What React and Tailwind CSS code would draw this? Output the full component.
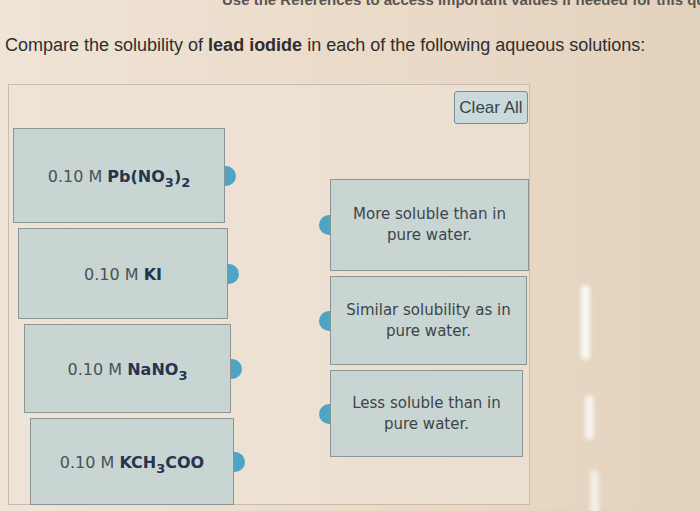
import React from "react";

const Sub = ({ children }) => (
  <span className="relative top-[5px] text-[13px]">{children}</span>
);

const leftItems = [
  { formula: <>Pb(NO<Sub>3</Sub>)<Sub>2</Sub></>, ml: "ml-[4px]", w: "w-[212px]", h: "h-[95px]" },
  { formula: <>KI</>, ml: "ml-[9px]", w: "w-[210px]", h: "h-[91px]" },
  { formula: <>NaNO<Sub>3</Sub></>, ml: "ml-[15px]", w: "w-[207px]", h: "h-[89px]" },
  { formula: <>KCH<Sub>3</Sub>COO</>, ml: "ml-[21px]", w: "w-[204px]", h: "h-[87px]" },
];

const rightItems = [
  { text: ["More soluble than in", "pure water."], w: "w-[199px]", h: "h-[92px]" },
  { text: ["Similar solubility as in", "pure water."], w: "w-[197px]", h: "h-[89px]" },
  { text: ["Less soluble than in", "pure water."], w: "w-[193px]", h: "h-[87px]" },
];

// draggable answer tile with the blue connector nub
function LeftCard({ item }) {
  return (
    <div className={`relative ${item.ml} ${item.w} ${item.h} flex items-center justify-center border border-[#8c9593] bg-[#c8d5d2] text-[16px] text-[#4a5254] font-['DejaVu_Sans',sans-serif]`}>
      <span className="whitespace-nowrap pt-[2px]">
        0.10 M <b className="text-[#26354f]">{item.formula}</b>
      </span>
      <div className="absolute right-[-12px] top-1/2 -translate-y-1/2 w-[11px] h-[20px] rounded-r-full bg-[#4ea4c4]" />
    </div>
  );
}

function RightCard({ item }) {
  return (
    <div className={`relative ${item.w} ${item.h} flex flex-col items-center justify-center border border-[#8c9593] bg-[#c8d5d2] text-[15px] leading-[21px] text-[#3c4548] font-['DejaVu_Sans',sans-serif]`}>
      {item.text.map((t) => (
        <span key={t}>{t}</span>
      ))}
      <div className="absolute left-[-12px] top-1/2 -translate-y-1/2 w-[11px] h-[20px] rounded-l-full bg-[#4ea4c4]" />
    </div>
  );
}

export default function App() {
  return (
    <div className="relative w-[700px] h-[511px] overflow-hidden bg-gradient-to-r from-[#efe4d7] via-[#ebdbc9] to-[#e2d2bd] font-['Liberation_Sans',sans-serif]">
      <div className="h-[9px] overflow-hidden pl-[222px]">
        <div className="-mt-[11px] whitespace-nowrap text-[15px] font-bold text-[#5a5550]">
          Use the References to access important values if needed for this question.
        </div>
      </div>

      <p className="mt-[23px] ml-[5px] text-[18px] text-[#2e2e2e] whitespace-nowrap">
        Compare the solubility of <b>lead iodide</b> in each of the following aqueous solutions:
      </p>

      <div className="mt-[25px] ml-[8px] w-[522px] h-[421px] border border-[#c9bcae] bg-[#ede2d6]/70">
        <div className="flex justify-end pt-[6px] pr-[1px]">
          <button className="w-[74px] h-[33px] rounded-[3px] border border-[#7f8d8f] bg-[#c9d9dc] text-[17px] text-[#3a4446]">
            Clear All
          </button>
        </div>

        <div className="flex">
          <div className="flex flex-col gap-[5px] pt-[4px]">
            {leftItems.map((it, i) => (
              <LeftCard key={i} item={it} />
            ))}
          </div>
          <div className="flex flex-col gap-[5px] pt-[55px] ml-[96px]">
            {rightItems.map((it, i) => (
              <RightCard key={i} item={it} />
            ))}
          </div>
        </div>
      </div>

      {/* screen glare streaks */}
      <div className="absolute left-[581px] top-[285px] w-[9px] h-[75px] rounded-full bg-white/80 blur-[2px]" />
      <div className="absolute left-[585px] top-[395px] w-[9px] h-[45px] rounded-full bg-white/70 blur-[2px]" />
      <div className="absolute left-[590px] top-[470px] w-[9px] h-[45px] rounded-full bg-white/60 blur-[2px]" />
    </div>
  );
}
